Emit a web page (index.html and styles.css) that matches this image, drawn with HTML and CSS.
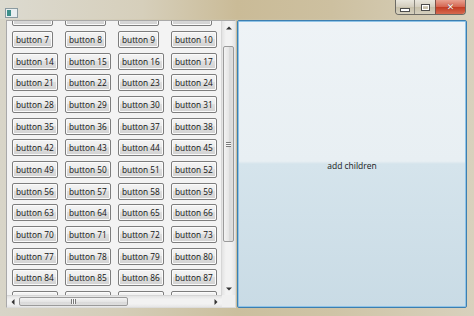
FILE: index.html
```html
<!DOCTYPE html>
<html>
<head>
<meta charset="utf-8">
<link rel="stylesheet" href="styles.css">
</head>
<body>
<div class="window">
  <div class="titlebar">
    <div class="appicon"><div class="appicon-fill"></div></div>
    <div class="caption">
      <div class="cbtn cmin"><div class="glyph-min"></div></div>
      <div class="cbtn cmax"><div class="glyph-max"></div></div>
      <div class="cbtn cclose"><span class="glyph-x">✕</span></div>
    </div>
  </div>
  <div class="body">
    <div class="scrollarea">
      <div class="sa-main">
        <div class="viewport">
          <div class="grid" id="grid"></div>
        </div>
        <div class="vscroll">
          <div class="arrow arrow-up"></div>
          <div class="vtrack"><div class="vthumb"><div class="grip-h"></div></div></div>
          <div class="arrow arrow-down"></div>
        </div>
      </div>
      <div class="sa-bottom">
        <div class="hscroll">
          <div class="arrow arrow-left"></div>
          <div class="htrack"><div class="hthumb"><div class="grip-v"></div></div></div>
          <div class="arrow arrow-right"></div>
        </div>
        <div class="corner"></div>
      </div>
    </div>
    <div class="bigbtn"><span class="bigbtn-label">add children</span></div>
  </div>
</div>
<script>
  var g = document.getElementById('grid');
  for (var i = 0; i < 105; i++) {
    var b = document.createElement('div');
    b.className = 'btn';
    b.textContent = 'button ' + i;
    g.appendChild(b);
  }
</script>
</body>
</html>
```
FILE: styles.css
```css
html, body {
  margin: 0;
  padding: 0;
  width: 474px;
  height: 316px;
  overflow: hidden;
  font-family: "Open Sans", "Noto Sans", sans-serif;
}

.window {
  width: 474px;
  height: 316px;
  display: flex;
  flex-direction: column;
  overflow: hidden;
  background: linear-gradient(90deg, #d8d5c8 0%, #d4cdb8 25%, #cbbf9e 50%, #cfc4a6 70%, #d8d1bd 100%);
}

.titlebar {
  height: 19px;
  flex: 0 0 19px;
  display: flex;
  align-items: flex-start;
  background: linear-gradient(90deg, #dcdad0 0%, #d6cfbb 30%, #cabb97 50%, #cdc0a0 70%, #d9d2bf 100%);
}

.appicon {
  margin: 8px 0 0 5px;
  width: 9px;
  height: 6px;
  border: 1px solid #8a9aa0;
  background: #e8eef0;
  display: flex;
  padding: 1px;
}
.appicon-fill {
  width: 4px;
  height: 100%;
  background: #3d8f8a;
}

.caption {
  margin-left: auto;
  margin-right: 8px;
  display: flex;
  height: 14px;
  border: 1px solid #6c6a64;
  border-top: none;
  border-radius: 0 0 4px 4px;
  overflow: hidden;
}
.cbtn {
  height: 14px;
  display: flex;
  align-items: center;
  justify-content: center;
}
.cmin {
  width: 18px;
  background: linear-gradient(#e9e6dd, #d3cdbd 50%, #c6bfa9 51%, #d6d0bf);
  border-right: 1px solid #8a877e;
}
.cmax {
  width: 20px;
  background: linear-gradient(#e9e6dd, #d3cdbd 50%, #c6bfa9 51%, #d6d0bf);
  border-right: 1px solid #7a5048;
}
.cclose {
  width: 29px;
  background: linear-gradient(#e8a190, #d4644f 50%, #c23b23 51%, #d66a4f);
}
.glyph-min {
  width: 8px;
  height: 2px;
  margin-top: 5px;
  background: #fff;
  border: 1px solid #4c4c4c;
}
.glyph-max {
  width: 7px;
  height: 5px;
  border: 1px solid #4c4c4c;
  outline: 1px solid #fff;
  outline-offset: -2px;
}
.glyph-x {
  color: #fff;
  font-family: "DejaVu Sans", sans-serif;
  font-size: 9px;
  font-weight: bold;
  line-height: 1;
  text-shadow: 0 0 1px #5a1a10;
}

.body {
  flex: 1;
  min-height: 0;
  display: flex;
  padding: 1px 7px 8px 6px;
  gap: 1px;
}

.scrollarea {
  width: 228px;
  min-height: 0;
  border: 1px solid #a9a9a9;
  border-right-color: #dcdcdc;
  border-bottom-color: #dcdcdc;
  display: flex;
  flex-direction: column;
  background: #f3f3f3;
  overflow: hidden;
}

.sa-main {
  flex: 1;
  display: flex;
  min-height: 0;
}

.viewport {
  width: 215px;
  min-height: 0;
  overflow: hidden;
}

.grid {
  display: grid;
  grid-template-columns: repeat(7, 47px);
  grid-auto-rows: 17px;
  column-gap: 6px;
  row-gap: 4.67px;
  padding-left: 5px;
  margin-top: -11.67px;
  width: max-content;
}

.btn {
  justify-self: start;
  height: 15px;
  padding: 0 3px;
  border: 1px solid #7d7d7d;
  border-radius: 2px;
  background: linear-gradient(#f4f4f4 0%, #ececec 45%, #dedede 50%, #d2d2d2 100%);
  box-shadow: inset 0 0 0 1px #fbfbfb;
  font-size: 8.3px;
  line-height: 15px;
  color: #111;
  white-space: nowrap;
}

.vscroll {
  width: 13px;
  display: flex;
  flex-direction: column;
  background: linear-gradient(90deg, #e3e3e3, #f2f2f2 30%, #f2f2f2 70%, #e6e6e6);
  border-left: 1px solid #d6d6d6;
}
.vtrack {
  flex: 1;
  display: flex;
  flex-direction: column;
  padding-top: 12px;
  padding-bottom: 40px;
}
.vthumb {
  flex: 1;
  margin: 0 1px;
  border: 1px solid #9a9a9a;
  border-radius: 2px;
  background: linear-gradient(90deg, #f3f3f3, #e6e6e6 50%, #d9d9d9 51%, #dedede);
  display: flex;
  align-items: center;
  justify-content: center;
}
.grip-h {
  width: 5px;
  height: 5px;
  background: repeating-linear-gradient(#7a7a7a 0 1px, #f8f8f8 1px 2px);
}

.arrow {
  flex: 0 0 13px;
  height: 13px;
  width: 13px;
  position: relative;
}
.arrow::after {
  content: "";
  position: absolute;
  width: 0;
  height: 0;
  left: 50%;
  top: 50%;
}
.arrow-up::after {
  border-left: 3px solid transparent;
  border-right: 3px solid transparent;
  border-bottom: 3px solid #333;
  transform: translate(-50%, -50%);
}
.arrow-down::after {
  border-left: 3px solid transparent;
  border-right: 3px solid transparent;
  border-top: 3px solid #333;
  transform: translate(-50%, -50%);
}
.arrow-left::after {
  border-top: 3px solid transparent;
  border-bottom: 3px solid transparent;
  border-right: 3px solid #333;
  transform: translate(-50%, -50%);
}
.arrow-right::after {
  border-top: 3px solid transparent;
  border-bottom: 3px solid transparent;
  border-left: 3px solid #333;
  transform: translate(-50%, -50%);
}

.sa-bottom {
  height: 12px;
  flex: 0 0 12px;
  display: flex;
}
.hscroll {
  width: 215px;
  display: flex;
  background: linear-gradient(#e3e3e3, #f2f2f2 30%, #f2f2f2 70%, #e6e6e6);
  border-top: 1px solid #d6d6d6;
}
.hscroll .arrow {
  height: 11px;
  flex: 0 0 12px;
}
.htrack {
  flex: 1;
  display: flex;
  padding-right: 82px;
}
.hthumb {
  flex: 1;
  margin: 1px 0;
  border: 1px solid #9a9a9a;
  border-radius: 2px;
  background: linear-gradient(#f3f3f3, #e6e6e6 50%, #d9d9d9 51%, #dedede);
  display: flex;
  align-items: center;
  justify-content: center;
}
.grip-v {
  width: 5px;
  height: 5px;
  background: repeating-linear-gradient(90deg, #7a7a7a 0 1px, #f8f8f8 1px 2px);
}
.corner {
  flex: 1;
  background: #f0f0f0;
}

.bigbtn {
  flex: 1;
  border: 1px solid #3c7fb1;
  border-radius: 2px;
  box-shadow: inset 0 0 0 1px #8fc3e6;
  background: linear-gradient(#eef3f6 0%, #e8eff3 49%, #d5e4ec 50%, #c9dbe5 100%);
  display: flex;
  align-items: center;
  justify-content: center;
}
.bigbtn-label {
  font-size: 8.5px;
  color: #1a1a1a;
  margin-top: 2px;
}
```
